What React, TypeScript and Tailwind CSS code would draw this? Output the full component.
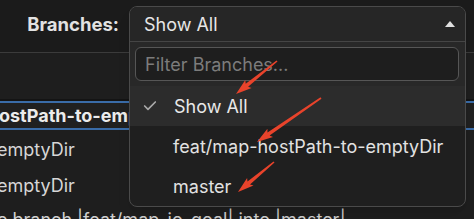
import { Check } from 'lucide-react'

type Pt = [number, number]

// tapered annotation arrow, drawn from tail to tip
function Arrow({ from, to }: { from: Pt; to: Pt }) {
  const [x1, y1] = from
  const [x2, y2] = to
  const dx = x2 - x1
  const dy = y2 - y1
  const len = Math.hypot(dx, dy)
  const ux = dx / len
  const uy = dy / len
  const nx = -uy
  const ny = ux
  const head = 14
  const bx = x2 - ux * head
  const by = y2 - uy * head
  const p = (x: number, y: number) => `${x.toFixed(1)},${y.toFixed(1)}`
  const points = [
    p(x1 + nx * 0.8, y1 + ny * 0.8),
    p(bx + nx * 1.9, by + ny * 1.9),
    p(bx + nx * 5 - ux * 2, by + ny * 5 - uy * 2),
    p(x2, y2),
    p(bx - nx * 5 - ux * 2, by - ny * 5 - uy * 2),
    p(bx - nx * 1.9, by - ny * 1.9),
    p(x1 - nx * 0.8, y1 - ny * 0.8),
  ].join(' ')
  return <polygon points={points} fill="#e8432b" />
}

export default function App() {
  return (
    <div className="relative w-[474px] h-[219px] overflow-hidden bg-[#1e1e1e] font-[Inter,sans-serif] text-[18px]">
      {/* Background page */}
      <div className="flex flex-col">
        <div className="h-[53px] bg-[#1b1b1b] border-b border-[#3b3b3b] flex">
          <div className="w-[119px] h-[50px] flex items-center justify-end font-bold text-[18.5px] text-[#e2e2e2]">
            Branches:
          </div>
        </div>
        <div className="h-[46px] bg-[#1e1e1e]" />
        <div className="h-[4px] bg-[#141414] border-b-2 border-[#3a6ca8]" />
        <div className="h-[27px] bg-[#202020] flex items-center whitespace-nowrap font-bold text-[#ececec] border-b-2 border-[#3a6ca8]">
          <span className="ml-[-1px]">ostPath-to-emptyDir</span>
        </div>
        <div className="h-[38px] flex items-center text-[#d6d6d6]">
          <span className="ml-[-3px]">emptyDir</span>
        </div>
        <div className="h-[34px] flex items-center text-[#d6d6d6]">
          <span className="ml-[-3px]">emptyDir</span>
        </div>
        <div className="pt-[7px] leading-[22px] whitespace-nowrap text-[#cfcfcf]">
          <span className="ml-[-3px]">e branch |feat/map-io-goal| into |master|</span>
        </div>
      </div>

      {/* Open branch select */}
      <div className="absolute left-[129px] top-[6px] w-[337px] rounded-[8px] border border-[#4a4a4a] bg-[#1f1f1f] overflow-hidden shadow-lg">
        <div className="h-[35px] bg-[#262626] border-b border-[#454545] flex items-center justify-between pl-[14px] pr-[10px] text-[#e6e6e6]">
          <span className="mt-[1px]">Show All</span>
          <span className="w-0 h-0 border-x-[5px] border-x-transparent border-b-[6px] border-b-[#e0e0e0]" />
        </div>
        <div className="bg-[#282828] pl-[5px] pr-[6px] py-[5px]">
          <div className="h-[34px] rounded-[6px] border border-[#565656] bg-[#1e1e1e] flex items-center pl-[9px] text-[#7c7c7c]">
            Filter Branches...
          </div>
        </div>
        <div className="h-[40px] bg-[#2c2c2c] flex items-center pl-[12px] text-[#e8e8e8]">
          <Check className="w-[16px] h-[16px] text-[#a8a8a8]" strokeWidth={2.5} />
          <span className="ml-[16px]">Show All</span>
        </div>
        <div className="h-[40px] flex items-center pl-[43px] text-[#e2e2e2] whitespace-nowrap">
          feat/map-hostPath-to-emptyDir
        </div>
        <div className="h-[40px] flex items-center pl-[43px] text-[#e2e2e2]">master</div>
      </div>

      {/* Annotation arrows */}
      <svg className="absolute inset-0 pointer-events-none" width="474" height="219" viewBox="0 0 474 219">
        <Arrow from={[277, 61]} to={[236, 94]} />
        <Arrow from={[321, 98]} to={[257, 142]} />
        <Arrow from={[274, 162]} to={[238, 192]} />
      </svg>
    </div>
  )
}
